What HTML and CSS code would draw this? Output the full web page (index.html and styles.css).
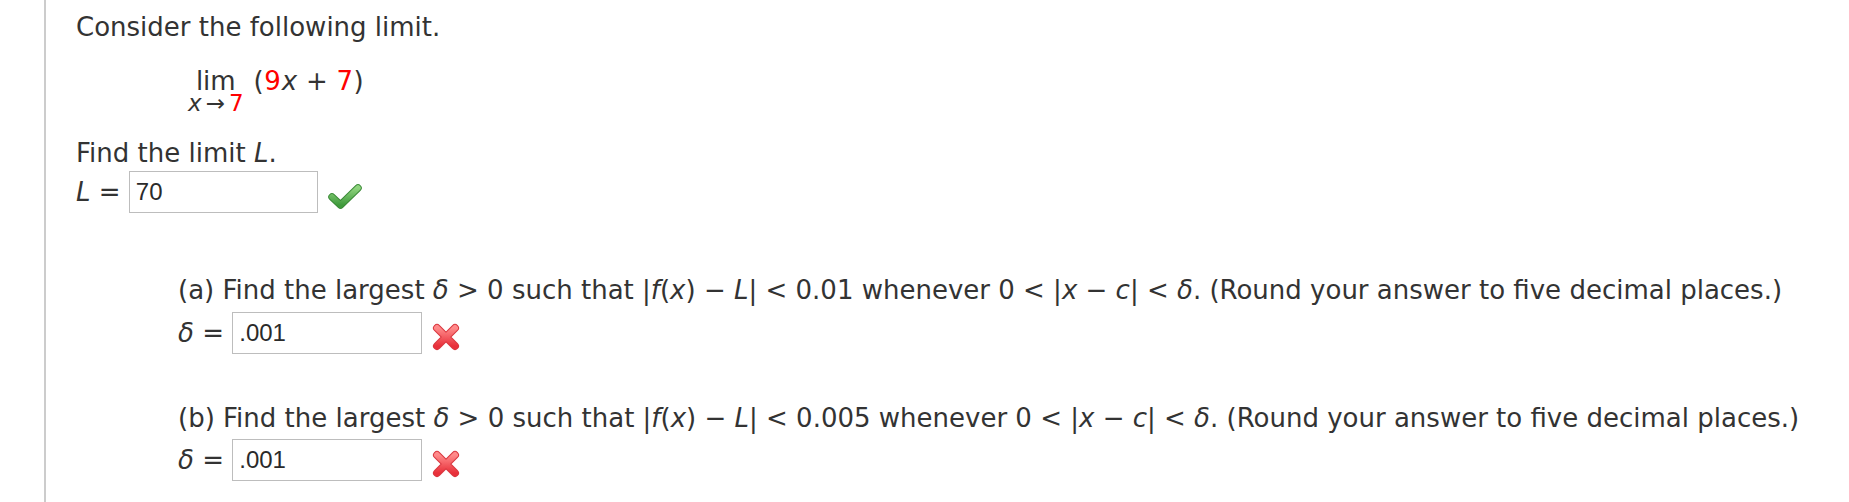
FILE: index.html
```html
<!DOCTYPE html>
<html>
<head>
<meta charset="utf-8">
<link rel="stylesheet" href="styles.css">
</head>
<body>
<div class="page">
  <p class="line intro">Consider the following limit.</p>
  <div class="limit">
    <div class="lim">
      <span class="lim-word">lim</span>
      <span class="lim-sub"><i>x</i><span class="arrow">→</span><span class="red">7</span></span>
    </div>
    <span class="expr">(<span class="red">9</span><i>x</i> + <span class="red">7</span>)</span>
  </div>
  <p class="line find">Find the limit <i>L</i>.</p>
  <div class="answer first">
    <span class="label"><i>L</i> = </span>
    <span class="box">70</span>
    <svg class="mark check" width="34" height="27" viewBox="0 0 34 27">
      <defs>
        <linearGradient id="g1" x1="0" y1="0" x2="0" y2="1">
          <stop offset="0" stop-color="#8fd47e"/>
          <stop offset="1" stop-color="#3f9a3c"/>
        </linearGradient>
      </defs>
      <path d="M4 14 L12.5 22 L30 5" fill="none" stroke="#3a8a36" stroke-width="7.5" stroke-linecap="round" stroke-linejoin="round"/>
      <path d="M4 14 L12.5 22 L30 5" fill="none" stroke="url(#g1)" stroke-width="5.5" stroke-linecap="round" stroke-linejoin="round"/>
    </svg>
  </div>
  <div class="part">
    <p class="line q">(a) Find the largest <i>δ</i> &gt; 0 such that |<i>f</i>(<i>x</i>) − <i>L</i>| &lt; 0.01 whenever 0 &lt; |<i>x</i> − <i>c</i>| &lt; <i>δ</i>. (Round your answer to five decimal places.)</p>
    <div class="answer">
      <span class="label"><i>δ</i> = </span>
      <span class="box wide">.001</span>
      <svg class="mark cross" width="28" height="28" viewBox="0 0 28 28">
        <defs>
          <linearGradient id="g2" x1="0" y1="0" x2="0" y2="1">
            <stop offset="0" stop-color="#ff8a8a"/>
            <stop offset="1" stop-color="#e8303a"/>
          </linearGradient>
        </defs>
        <path d="M5 5 L23 23 M23 5 L5 23" fill="none" stroke="#d9363e" stroke-width="8" stroke-linecap="round"/>
        <path d="M5 5 L23 23 M23 5 L5 23" fill="none" stroke="url(#g2)" stroke-width="6" stroke-linecap="round"/>
      </svg>
    </div>
  </div>
  <div class="part second">
    <p class="line q">(b) Find the largest <i>δ</i> &gt; 0 such that |<i>f</i>(<i>x</i>) − <i>L</i>| &lt; 0.005 whenever 0 &lt; |<i>x</i> − <i>c</i>| &lt; <i>δ</i>. (Round your answer to five decimal places.)</p>
    <div class="answer">
      <span class="label"><i>δ</i> = </span>
      <span class="box wide">.001</span>
      <svg class="mark cross" width="28" height="28" viewBox="0 0 28 28">
        <path d="M5 5 L23 23 M23 5 L5 23" fill="none" stroke="#d9363e" stroke-width="8" stroke-linecap="round"/>
        <path d="M5 5 L23 23 M23 5 L5 23" fill="none" stroke="url(#g2)" stroke-width="6" stroke-linecap="round"/>
      </svg>
    </div>
  </div>
</div>
</body>
</html>
```
FILE: styles.css
```css
html, body {
  margin: 0;
  padding: 0;
  background: #fff;
}
body {
  font-family: "DejaVu Sans", Verdana, sans-serif;
  font-size: 26px;
  color: #333;
}
.page {
  margin-left: 44px;
  border-left: 2px solid #cccccc;
  padding-left: 30px;
  padding-top: 12px;
  height: 502px;
  box-sizing: border-box;
}
.line {
  margin: 0;
  line-height: 30px;
  white-space: nowrap;
}
i {
  font-style: italic;
}
.red {
  color: #ff0000;
}
.limit {
  display: flex;
  align-items: baseline;
  margin-top: 26px;
  margin-left: 112px;
}
.lim {
  display: flex;
  flex-direction: column;
  align-items: center;
}
.lim-word {
  line-height: 26px;
}
.lim-sub {
  font-size: 23px;
  line-height: 18px;
}
.arrow {
  margin: 0 4px;
}
.expr {
  margin-left: 10px;
  line-height: 26px;
}
.expr .red,
.expr i {
  margin: 0 0.5px;
}
.find {
  margin-top: 26px;
}
.answer {
  display: flex;
  align-items: center;
  height: 42px;
  margin-top: 3px;
}
.label {
  white-space: pre;
  line-height: 42px;
}
.box {
  box-sizing: border-box;
  width: 189px;
  height: 42px;
  border: 1px solid #bdbdbd;
  padding-left: 6px;
  font-family: "Liberation Sans", Arial, sans-serif;
  font-size: 24px;
  line-height: 40px;
  color: #2a2a2a;
}
.box.wide {
  width: 190px;
}
.mark {
  margin-left: 10px;
  position: relative;
  top: 4px;
}
.part {
  margin-left: 102px;
  margin-top: 62px;
}
.part .answer {
  margin-top: 7px;
}
.part.second {
  margin-top: 49px;
}
.part.second .answer {
  margin-top: 6px;
}
```
